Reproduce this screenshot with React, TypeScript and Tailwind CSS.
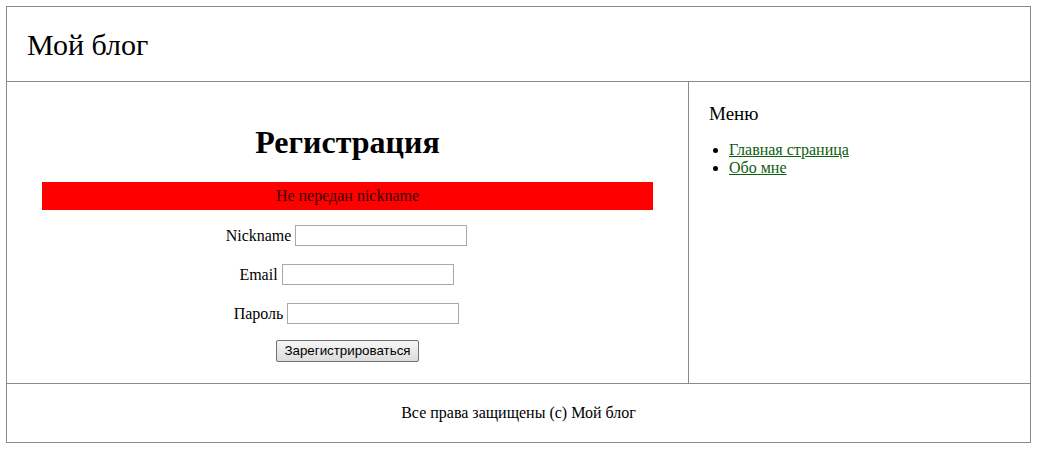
const serif = "font-['Liberation_Serif','Times_New_Roman',serif]";

const FormRow = ({ label, type = "text" }: { label: string; type?: string }) => (
  <div className="flex items-center justify-center h-[21px] gap-[4px] pr-[2px]">
    <label className="text-[16px] leading-[21px]">{label}</label>
    <input
      type={type}
      className="w-[172px] h-[21px] border border-[#a9a9a9] bg-white outline-none"
    />
  </div>
);

const App = () => {
  return (
    <div className={`${serif} text-black bg-white w-[1039px] h-[450px]`}>
      <div className="ml-[6px] mt-[6px] w-[1025px] border border-[#8a8a8a]">
        <header className="h-[75px] border-b border-[#8a8a8a] flex items-center pl-[20px]">
          <h1 className="text-[30px] leading-[35px]">Мой блог</h1>
        </header>

        <div className="flex h-[301px]">
          <main className="w-[682px] border-r border-[#8a8a8a] flex flex-col items-center">
            <h2 className="mt-[42px] text-[32px] leading-[37px] font-bold">Регистрация</h2>
            <div className="mt-[21px] w-[611px] h-[28px] bg-[#ff0000] text-[#3a0000] text-[16px] flex items-center justify-center">
              Не передан nickname
            </div>
            <form className="mt-[15px] flex flex-col gap-[18px] w-full">
              <FormRow label="Nickname" />
              <FormRow label="Email" type="email" />
              <FormRow label="Пароль" type="password" />
              <div className="flex justify-center -mt-[2px]">
                <button
                  type="button"
                  className="font-['Liberation_Sans',Arial,sans-serif] text-[13.33px] h-[22px] px-[7px] border border-[#707070] rounded-[2px] bg-gradient-to-b from-[#f6f6f6] to-[#dcdcdc] text-black"
                >
                  Зарегистрироваться
                </button>
              </div>
            </form>
          </main>

          <aside className="flex-1 pl-[20px] pt-[20px]">
            <h3 className="text-[19px] leading-[23px]">Меню</h3>
            <ul className="mt-[16px] list-disc pl-[20px] text-[16px] leading-[18px]">
              <li>
                <a href="#" className="text-[#0d600d] underline">
                  Главная страница
                </a>
              </li>
              <li>
                <a href="#" className="text-[#0d600d] underline">
                  Обо мне
                </a>
              </li>
            </ul>
          </aside>
        </div>

        <footer className="h-[59px] border-t border-[#8a8a8a] flex items-center justify-center text-[16px]">
          Все права защищены (с) Мой блог
        </footer>
      </div>
    </div>
  );
};

export default App;
